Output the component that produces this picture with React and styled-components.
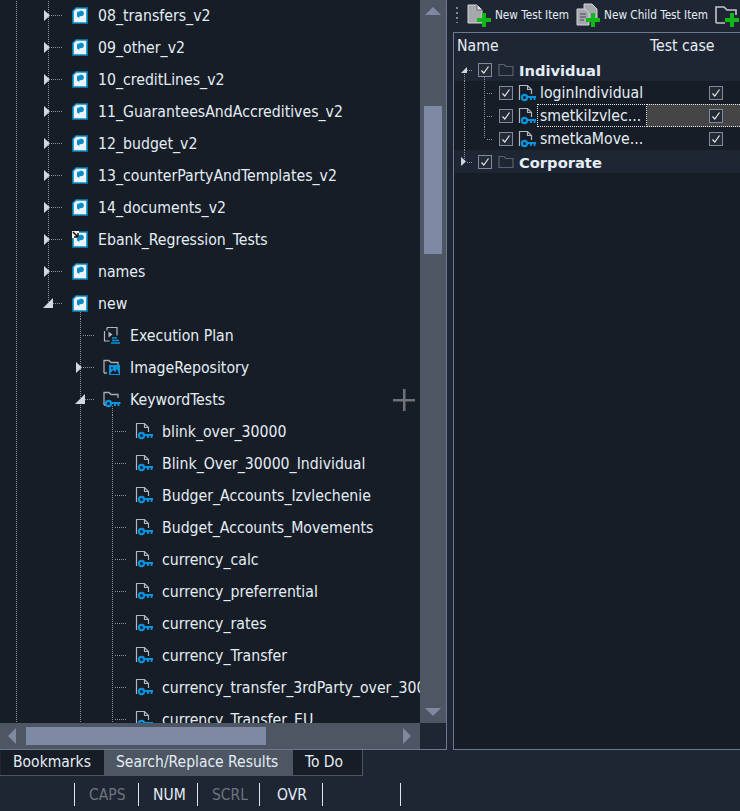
import React from "react";
import styled, { createGlobalStyle } from "styled-components";

const GlobalStyle = createGlobalStyle`
  html, body {
    margin: 0;
    height: 811px;
    overflow: hidden;
    background: #1f2633;
  }
`;

const dotted = "repeating-linear-gradient(to bottom, #8792a6 0 1px, transparent 1px 2px)";
const dottedH = "repeating-linear-gradient(to right, #8792a6 0 1px, transparent 1px 2px)";

const Page = styled.div`
  width: 740px;
  height: 811px;
  display: flex;
  flex-direction: column;
  font-family: "DejaVu Sans Condensed", "Noto Sans", "Liberation Sans", sans-serif;
  color: #e4edf5;
`;

const Workspace = styled.div`
  height: 750px;
  display: flex;
  gap: 6px;
`;

const LeftPanel = styled.div`
  position: relative;
  width: 447px;
  box-sizing: border-box;
  border-right: 1px solid #6c7a90;
  border-bottom: 1px solid #6c7a90;
  display: grid;
  grid-template-columns: 420px 26px;
  grid-template-rows: 723px 26px;
`;

const Tree = styled.div`
  background: #171d26;
  overflow: hidden;
  margin: 0;
`;

const TreeInner = styled.div`
  margin-top: -1px;
`;

const TreeRow = styled.div`
  height: 32px;
  display: flex;
  align-items: stretch;
`;

const Guide = styled.div`
  width: ${(p) => p.$size}px;
  flex: none;
  background: ${(p) => (p.$on ? dotted : "none")} no-repeat center / 1px 100%;
`;

const Connector = styled.div`
  position: relative;
  width: ${(p) => p.$size}px;
  flex: none;
  display: flex;
  align-items: center;
  justify-content: center;
  &::before {
    content: "";
    position: absolute;
    left: ${(p) => Math.floor(p.$size / 2)}px;
    width: 1px;
    top: ${(p) => (p.$line === "bottom" ? "50%" : 0)};
    bottom: ${(p) => (p.$line === "top" ? "50%" : 0)};
    background: ${(p) => (p.$line === "none" ? "none" : dotted)};
  }
  &::after {
    content: "";
    position: absolute;
    top: 50%;
    height: 1px;
    left: ${(p) => Math.floor(p.$size / 2) + 3}px;
    right: 2px;
    background: ${dottedH};
  }
  svg {
    position: relative;
    z-index: 1;
  }
`;

const IconCell = styled.div`
  position: relative;
  width: ${(p) => p.$size}px;
  flex: none;
  display: flex;
  align-items: center;
  justify-content: center;
  ${(p) =>
    p.$branch &&
    `&::after {
      content: "";
      position: absolute;
      left: ${Math.floor(p.$size / 2)}px;
      width: 1px;
      top: calc(50% + 7px);
      bottom: 0;
      background: ${dotted};
    }`}
`;

const Label = styled.span`
  margin-left: 2px;
  line-height: 33px;
  font-size: 15.7px;
  white-space: nowrap;
`;

const VTrack = styled.div`
  background: #4d5662;
  display: flex;
  flex-direction: column;
  align-items: center;
`;

const VThumb = styled.div`
  width: 18px;
  height: 148px;
  margin-top: 91px;
  background: #7e8aa3;
`;

const HTrack = styled.div`
  background: #4d5662;
  display: flex;
  align-items: center;
  padding: 0 9px 0 8px;
`;

const HThumb = styled.div`
  width: 240px;
  height: 18px;
  margin-left: 10px;
  background: #7e8aa3;
`;

const Corner = styled.div`
  background: #1f2633;
`;

const RightColumn = styled.div`
  flex: 1;
  min-width: 0;
  display: flex;
  flex-direction: column;
`;

const Toolbar = styled.div`
  height: 32px;
  box-sizing: border-box;
  padding-bottom: 2px;
  display: flex;
  align-items: center;
  overflow: hidden;
  white-space: nowrap;
`;

const Grip = styled.div`
  width: 2px;
  height: 16px;
  flex: none;
  margin: 0 9px 0 3px;
  background: repeating-linear-gradient(to bottom, #7f8898 0 2px, transparent 2px 5px);
`;

const ToolButton = styled.div`
  display: flex;
  align-items: center;
  gap: 4px;
  margin-right: 7px;
  font-size: 11.7px;
  flex: none;
`;

const ItemsPanel = styled.div`
  flex: 1;
  background: #171d26;
  border: 1px solid #6c7a90;
  border-right: none;
  display: flex;
  flex-direction: column;
`;

const HeaderRow = styled.div`
  height: 25px;
  display: flex;
  align-items: center;
  background: #1f2633;
  font-size: 15.7px;
`;

const NameHead = styled.div`
  width: 196px;
  padding-left: 3px;
  box-sizing: border-box;
`;

const ItemRow = styled.div`
  height: 23px;
  display: flex;
  align-items: stretch;
  background: ${(p) => (p.$alt ? "#1f2633" : "#171d26")};
`;

const NameCell = styled.div`
  width: 193px;
  flex: none;
  display: flex;
  align-items: stretch;
`;

const ItemLabel = styled.span`
  flex: 1;
  min-width: 0;
  box-sizing: border-box;
  padding-left: ${(p) => (p.$group ? "3px" : "3px")};
  font-size: ${(p) => (p.$group ? "14.7px" : "15.7px")};
  font-weight: ${(p) => (p.$group ? 700 : 400)};
  font-family: ${(p) => (p.$group ? '"DejaVu Sans", sans-serif' : "inherit")};
  line-height: ${(p) => (p.$group ? "25px" : "24px")};
  white-space: nowrap;
  ${(p) => p.$focus && "outline: 1px dotted #e8e8e8; outline-offset: -1px;"}
`;

const CaseCell = styled.div`
  flex: 1;
  display: flex;
  align-items: center;
  padding-left: 62px;
  ${(p) =>
    p.$selected &&
    `background: #454545;
     border-top: 1px dotted #e8e8e8;
     border-bottom: 1px dotted #e8e8e8;`}
`;

const Check = styled.div`
  width: 12px;
  height: 12px;
  flex: none;
  border: 1px solid #7f8a9c;
  background: #252b36;
  display: flex;
  align-items: center;
  justify-content: center;
`;

const Tabs = styled.div`
  height: 26px;
  width: 363px;
  box-sizing: border-box;
  padding-left: 1px;
  display: flex;
  border-right: 1px solid #4d5662;
  border-bottom: 1px solid #4d5662;
`;

const Tab = styled.div`
  width: ${(p) => p.$width}px;
  box-sizing: border-box;
  padding-left: 12px;
  font-size: 15.5px;
  line-height: 25px;
  white-space: nowrap;
  background: ${(p) => (p.$active ? "#4d5662" : "#171d26")};
`;

const StatusBar = styled.div`
  flex: 1;
  display: flex;
  align-items: center;
  padding-left: 74px;
  padding-top: 1px;
`;

const StatusCell = styled.div`
  width: ${(p) => p.$width}px;
  height: 23px;
  box-sizing: border-box;
  padding-left: ${(p) => p.$pad || 14}px;
  border-left: 1px solid #dfe5ee;
  font-size: 15.5px;
  line-height: 24px;
  color: ${(p) => (p.$dim ? "#6d7480" : "#e4edf5")};
  ${(p) => p.$last && "border-right: 1px solid #dfe5ee;"}
`;

const CursorCross = styled.svg`
  position: absolute;
  left: 393px;
  top: 389px;
`;

const ScrollArrow = ({ dir, style }) => {
  const pts = {
    up: "0,9 10,0 20,9",
    down: "0,0 20,0 10,9",
    left: "9,0 9,20 0,10",
    right: "0,0 0,20 9,10",
  }[dir];
  const wide = dir === "up" || dir === "down";
  return (
    <svg
      width={wide ? 16 : 8}
      height={wide ? 8 : 16}
      viewBox={wide ? "0 0 20 9" : "0 0 9 20"}
      style={style}
      preserveAspectRatio="none"
    >
      <polygon points={pts} fill="#7e8aa3" />
    </svg>
  );
};

const Arrow = ({ open, small }) => {
  if (open) {
    const s = small ? 6 : 10;
    return (
      <svg width={s} height={s} viewBox="0 0 10 10">
        <polygon points="10,0 10,10 0,10" fill="#d4d8de" />
      </svg>
    );
  }
  return (
    <svg width={small ? 5 : 6} height={small ? 9 : 11} viewBox="0 0 6 11" style={{ marginLeft: -2 }}>
      <polygon points="0,0 6,5.5 0,11" fill="#d4d8de" />
    </svg>
  );
};

const ProjectIcon = ({ link }) => (
  <svg width="16" height="17" viewBox="0 0 16 17">
    <path d="M4 1h11v15H1V4z" fill="#e9f5fb" stroke="#0b8ac8" strokeWidth="1.6" />
    <circle cx="9" cy="6.5" r="2.8" fill="#0b8ac8" />
    <path d="M5 4.5v5l2.5 1.5V6z" fill="#0b8ac8" />
    {link && (
      <g>
        <rect x="0" y="0" width="7" height="7" fill="#eee" />
        <path d="M1 1l5 5M6 2v4H2" stroke="#111" strokeWidth="1.5" fill="none" />
      </g>
    )}
  </svg>
);

const Key = ({ x = 0, y = 0 }) => (
  <g transform={`translate(${x} ${y})`}>
    <circle cx="3.5" cy="3.5" r="2.6" fill="none" stroke="#0a94de" strokeWidth="2.2" />
    <path d="M6 3h9.5M10 3v3M13.5 3v3" stroke="#0a94de" strokeWidth="2" fill="none" />
  </g>
);

const KeyFileIcon = () => (
  <svg width="18" height="18" viewBox="0 0 18 18">
    <path d="M1.5 16V1.5h8l4 4V10M9.5 1.5v4h4" fill="none" stroke="#b4b8be" strokeWidth="1.2" />
    <Key x="3" y="10" />
  </svg>
);

const FolderShape = ({ stroke = "#a9adb4" }) => (
  <path d="M1 15V2.5h5l2 2h7V8M1 15h3" fill="none" stroke={stroke} strokeWidth="1.3" />
);

const KeyFolderIcon = () => (
  <svg width="18" height="18" viewBox="0 0 18 18">
    <FolderShape />
    <Key x="2" y="10" />
  </svg>
);

const ImageFolderIcon = () => (
  <svg width="18" height="18" viewBox="0 0 18 18">
    <FolderShape />
    <rect x="6" y="7" width="11" height="10" fill="#0a94de" />
    <path d="M7 16l3-4 2 2 2-3 2 5z" fill="#171d26" />
    <circle cx="9" cy="10" r="1" fill="#171d26" />
  </svg>
);

const PlanIcon = () => (
  <svg width="18" height="18" viewBox="0 0 18 18">
    <path d="M4 1.5h10v8M4 1.5v3M1.5 5v10h5" fill="none" stroke="#b4b8be" strokeWidth="1.2" />
    <path d="M5.5 5.5l4 3-4 3z" fill="#b4b8be" />
    <path d="M9 12h5M9 14.5h7M8 17h9" stroke="#0a94de" strokeWidth="1.6" />
  </svg>
);

const SmallFolder = () => (
  <svg width="16" height="14" viewBox="0 0 16 14">
    <path d="M1 12.5V1.5h5l2 2h7v9z" fill="none" stroke="#5c626c" strokeWidth="1.2" />
  </svg>
);

const Tick = () => (
  <svg width="10" height="10" viewBox="0 0 10 10">
    <path d="M1.5 5.5l2.3 2.5L8.5 1.5" fill="none" stroke="#e8e8e8" strokeWidth="1.2" />
  </svg>
);

const GreenPlus = ({ x, y }) => (
  <path transform={`translate(${x} ${y})`} d="M5 0h4v5h5v4H9v5H5V9H0V5h5z" fill="#12b81a" />
);

const NewItemIcon = () => (
  <svg width="24" height="24" viewBox="0 0 24 24">
    <path d="M1 2h9l5 5v13H1z" fill="#a5a8ad" stroke="#d2d4d7" strokeWidth="1" />
    <path d="M10 2v5h5" fill="#e5e6e8" stroke="#5c5f64" />
    <GreenPlus x="10" y="10" />
  </svg>
);

const NewChildIcon = () => (
  <svg width="24" height="24" viewBox="0 0 24 24">
    <path d="M8 1h8l5 5v12H8z" fill="#a5a8ad" stroke="#d2d4d7" />
    <path d="M1 6h8l4 4v12H1z" fill="#a5a8ad" stroke="#d2d4d7" />
    <path d="M4 11h6M4 14h6M4 17h4" stroke="#45484d" />
    <GreenPlus x="10" y="10" />
  </svg>
);

const NewGroupIcon = () => (
  <svg width="24" height="24" viewBox="0 0 24 24">
    <path d="M1 20V4h8l3 3h9v5M1 20h9" fill="none" stroke="#c2c5c9" strokeWidth="1.6" />
    <GreenPlus x="10" y="10" />
  </svg>
);

const projects = [
  "08_transfers_v2",
  "09_other_v2",
  "10_creditLines_v2",
  "11_GuaranteesAndAccreditives_v2",
  "12_budget_v2",
  "13_counterPartyAndTemplates_v2",
  "14_documents_v2",
];

const keywordTests = [
  "blink_over_30000",
  "Blink_Over_30000_Individual",
  "Budger_Accounts_Izvlechenie",
  "Budget_Accounts_Movements",
  "currency_calc",
  "currency_preferrential",
  "currency_rates",
  "currency_Transfer",
  "currency_transfer_3rdParty_over_30000",
  "currency_Transfer_EU",
];

const rows = [
  ...projects.map((name) => ({ name, guides: [1], line: "full", arrow: "closed", icon: <ProjectIcon /> })),
  { name: "Ebank_Regression_Tests", guides: [1], line: "full", arrow: "closed", icon: <ProjectIcon link /> },
  { name: "names", guides: [1], line: "full", arrow: "closed", icon: <ProjectIcon /> },
  { name: "new", guides: [1], line: "top", arrow: "open", icon: <ProjectIcon />, branch: true },
  { name: "Execution Plan", guides: [1, 0], line: "full", icon: <PlanIcon /> },
  { name: "ImageRepository", guides: [1, 0], line: "full", arrow: "closed", icon: <ImageFolderIcon /> },
  { name: "KeywordTests", guides: [1, 0], line: "full", arrow: "open", icon: <KeyFolderIcon />, branch: true },
  ...keywordTests.map((name) => ({ name, guides: [1, 0, 1], line: "full", icon: <KeyFileIcon /> })),
];

const items = [
  { name: "Individual", group: true, open: true, alt: true },
  { name: "loginIndividual", line: "full" },
  { name: "smetkiIzvlec...", line: "full", selected: true },
  { name: "smetkaMove...", line: "top" },
  { name: "Corporate", group: true, alt: true },
];

const ItemNode = ({ item }) => (
  <ItemRow $alt={item.alt}>
    <NameCell>
      {item.group ? (
        <>
          <Connector $size={20} $line={item.open ? "bottom" : "top"}>
            <Arrow small open={item.open} />
          </Connector>
          <IconCell $size={21} $branch={item.open}>
            <Check>
              <Tick />
            </Check>
          </IconCell>
          <IconCell $size={21}>
            <SmallFolder />
          </IconCell>
        </>
      ) : (
        <>
          <Guide $size={20} $on />
          <Connector $size={21} $line={item.line} />
          <IconCell $size={21}>
            <Check>
              <Tick />
            </Check>
          </IconCell>
          <IconCell $size={21}>
            <KeyFileIcon />
          </IconCell>
        </>
      )}
      <ItemLabel $group={item.group} $focus={item.selected}>
        {item.name}
      </ItemLabel>
    </NameCell>
    <CaseCell $selected={item.selected}>
      {!item.group && (
        <Check>
          <Tick />
        </Check>
      )}
    </CaseCell>
  </ItemRow>
);

const App = () => {
  return (
    <Page>
      <GlobalStyle />
      <Workspace>
        <LeftPanel>
          <Tree>
            <TreeInner>
              {rows.map((row) => (
                <TreeRow key={row.name}>
                  {row.guides.map((on, i) => (
                    <Guide key={i} $size={32} $on={!!on} />
                  ))}
                  <Connector $size={32} $line={row.line}>
                    {row.arrow && <Arrow open={row.arrow === "open"} />}
                  </Connector>
                  <IconCell $size={32} $branch={row.branch}>
                    {row.icon}
                  </IconCell>
                  <Label>{row.name}</Label>
                </TreeRow>
              ))}
            </TreeInner>
          </Tree>
          <VTrack>
            <ScrollArrow dir="up" style={{ marginTop: 7 }} />
            <VThumb />
            <ScrollArrow dir="down" style={{ marginTop: "auto", marginBottom: 7 }} />
          </VTrack>
          <HTrack>
            <ScrollArrow dir="left" />
            <HThumb />
            <ScrollArrow dir="right" style={{ marginLeft: "auto" }} />
          </HTrack>
          <Corner />
          {/* mouse cursor caught in the shot */}
          <CursorCross width="22" height="22" viewBox="0 0 22 22">
            <path d="M10 0h2.5v10H22v2.5h-9.5V22H10v-9.5H0V10h10z" fill="#6f7276" />
          </CursorCross>
        </LeftPanel>
        <RightColumn>
          <Toolbar>
            <Grip />
            <ToolButton>
              <NewItemIcon />
              New Test Item
            </ToolButton>
            <ToolButton>
              <NewChildIcon />
              New Child Test Item
            </ToolButton>
            <ToolButton>
              <NewGroupIcon />
            </ToolButton>
          </Toolbar>
          <ItemsPanel>
            <HeaderRow>
              <NameHead>Name</NameHead>
              <span>Test case</span>
            </HeaderRow>
            {items.map((item) => (
              <ItemNode key={item.name} item={item} />
            ))}
          </ItemsPanel>
        </RightColumn>
      </Workspace>
      <Tabs>
        <Tab $width={103}>Bookmarks</Tab>
        <Tab $width={189} $active>Search/Replace Results</Tab>
        <Tab $width={69}>To Do</Tab>
      </Tabs>
      <StatusBar>
        <StatusCell $width={64} $dim>CAPS</StatusCell>
        <StatusCell $width={59}>NUM</StatusCell>
        <StatusCell $width={62} $dim>SCRL</StatusCell>
        <StatusCell $width={63} $pad={17}>OVR</StatusCell>
        <StatusCell $width={79} $last />
      </StatusBar>
    </Page>
  );
};

export default App;
